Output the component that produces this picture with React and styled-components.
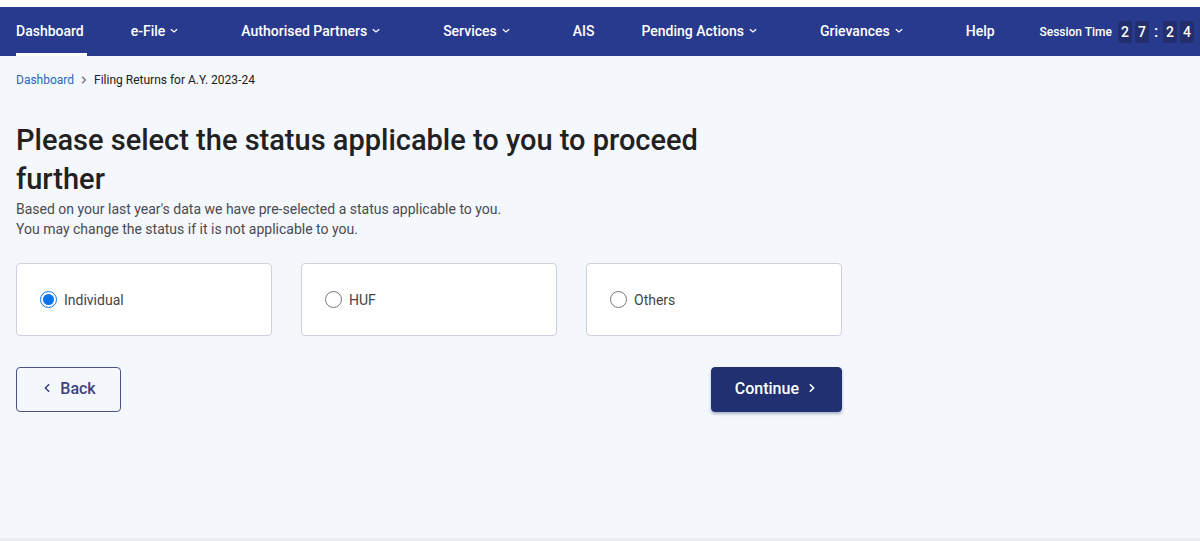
import React, { useState } from 'react';
import styled, { createGlobalStyle } from 'styled-components';

const GlobalStyle = createGlobalStyle`
* {
  box-sizing: border-box;
}
body {
  margin: 0;
  background: #f4f7fb;
  color: #212121;
  font-family: Roboto, "Liberation Sans", sans-serif;
  font-size: 14px;
}
button, input {
  font-family: inherit;
}
`;

const Page = styled.div`
display: flex;
flex-direction: column;
min-height: 100vh;
border-top: 7px solid #fff;
border-bottom: 3px solid #ebedf2;
`;

const NavBar = styled.nav`
display: flex;
align-items: stretch;
justify-content: space-between;
height: 49px;
padding: 0 6px 0 16px;
background: #283a8d;
white-space: nowrap;
`;

const NavList = styled.ul`
display: flex;
gap: 44px;
margin: 0;
padding: 0;
list-style: none;
`;

const NavItem = styled.li`
display: flex;
padding-right: ${(props) => (props.$menu ? '18px' : '3px')};
border-bottom: 3px solid ${(props) => (props.$active ? '#fff' : 'transparent')};
`;

const NavLink = styled.a`
display: flex;
align-items: center;
gap: 4px;
padding-top: 2px;
color: #fff;
font-size: 14px;
font-weight: 500;
text-decoration: none;
`;

const NavButton = styled.button`
display: flex;
align-items: center;
gap: 4px;
padding: 2px 0 0;
border: none;
background: transparent;
color: #fff;
font-size: 14px;
font-weight: 500;
cursor: pointer;
`;

const Session = styled.div`
display: flex;
align-items: center;
color: #fff;
font-size: 12px;
font-weight: 500;
`;

const Timer = styled.div`
display: flex;
align-items: center;
gap: 3px;
margin-left: 6px;
`;

const Digit = styled.span`
width: 14px;
border-radius: 2px;
background: #232f6c;
font-size: 14px;
line-height: 22px;
text-align: center;
`;

const Colon = styled.span`
width: 8px;
font-size: 16px;
line-height: 20px;
text-align: center;
`;

const Content = styled.main`
padding: 16px;
`;

const Breadcrumb = styled.nav`
display: flex;
align-items: center;
gap: 5px;
color: #212121;
font-size: 12px;
line-height: 16px;
`;

const CrumbLink = styled.a`
color: #2a67b9;
text-decoration: none;
`;

const Form = styled.form`
max-width: 826px;
margin-top: 33px;
`;

const Title = styled.h1`
max-width: 720px;
margin: 0;
font-size: 29px;
font-weight: 500;
line-height: 39px;
`;

const Note = styled.p`
margin: 0;
color: #494b52;
font-size: 14px;
line-height: 20px;
`;

const Options = styled.div`
display: grid;
grid-template-columns: repeat(3, 1fr);
gap: 29px;
margin-top: 24px;
`;

const Option = styled.label`
display: flex;
align-items: center;
gap: 7px;
height: 73px;
padding: 0 23px;
border: 1px solid #cdd1de;
border-radius: 4px;
background: #fff;
color: #43454a;
font-size: 14px;
line-height: 20px;
cursor: pointer;
`;

const Radio = styled.input`
appearance: none;
display: grid;
place-items: center;
width: 17px;
height: 17px;
margin: 0;
border: 1px solid #767676;
border-radius: 50%;
background: #fff;

&:checked {
  border-color: #0b74ec;
}
&:checked::before {
  content: "";
  width: 11px;
  height: 11px;
  border-radius: 50%;
  background: #0b74ec;
}
`;

const Actions = styled.div`
display: flex;
justify-content: space-between;
margin-top: 31px;
`;

const Button = styled.button`
display: flex;
align-items: center;
justify-content: center;
gap: 7px;
min-width: 105px;
height: 45px;
padding: 0 23px 3px;
border: 1px solid ${(props) => (props.$primary ? '#203070' : '#4d5486')};
border-radius: 4px;
background: ${(props) => (props.$primary ? '#203070' : 'transparent')};
box-shadow: ${(props) => (props.$primary ? '0 2px 3px rgba(32, 48, 112, 0.35)' : 'none')};
color: ${(props) => (props.$primary ? '#fff' : '#3a427e')};
font-size: 16px;
font-weight: 500;
cursor: pointer;
`;

const icons = {
  down: 'M2 3.5L5.5 6.5L9 3.5',
  left: 'M7.5 2L4 5.5L7.5 9',
  right: 'M3.5 2L7 5.5L3.5 9',
};

const Chevron = ({ to, size = 10, color = 'currentColor' }) => (
  <svg width={size} height={size} viewBox="0 0 11 11" fill="none" stroke={color} strokeWidth="1.4" aria-hidden="true">
    <path d={icons[to]} />
  </svg>
);

const menu = [
  { name: 'Dashboard', active: true },
  { name: 'e-File', menu: true },
  { name: 'Authorised Partners', menu: true },
  { name: 'Services', menu: true },
  { name: 'AIS' },
  { name: 'Pending Actions', menu: true },
  { name: 'Grievances', menu: true },
  { name: 'Help' },
];

const statuses = ['Individual', 'HUF', 'Others'];

export default function App() {
  const [status, setStatus] = useState('Individual');

  return (
    <>
      <GlobalStyle />
      <Page>
        <NavBar>
          <NavList>
            {menu.map((item) => (
              <NavItem key={item.name} $active={item.active} $menu={item.menu}>
                {item.menu ? (
                  <NavButton type="button">
                    {item.name}
                    <Chevron to="down" />
                  </NavButton>
                ) : (
                  <NavLink href="#">{item.name}</NavLink>
                )}
              </NavItem>
            ))}
          </NavList>
          <Session>
            Session Time
            <Timer>
              <Digit>2</Digit>
              <Digit>7</Digit>
              <Colon>:</Colon>
              <Digit>2</Digit>
              <Digit>4</Digit>
            </Timer>
          </Session>
        </NavBar>
        <Content>
          <Breadcrumb>
            <CrumbLink href="#">Dashboard</CrumbLink>
            <Chevron to="right" color="#6b6e78" />
            <span>Filing Returns for A.Y. 2023-24</span>
          </Breadcrumb>
          <Form onSubmit={(e) => e.preventDefault()}>
            <Title>Please select the status applicable to you to proceed further</Title>
            <Note>Based on your last year's data we have pre-selected a status applicable to you.</Note>
            <Note>You may change the status if it is not applicable to you.</Note>
            <Options>
              {statuses.map((name) => (
                <Option key={name}>
                  <Radio
                    type="radio"
                    name="status"
                    checked={status === name}
                    onChange={() => setStatus(name)}
                  />
                  {name}
                </Option>
              ))}
            </Options>
            <Actions>
              <Button type="button">
                <Chevron to="left" size={12} />
                Back
              </Button>
              <Button type="submit" $primary>
                Continue
                <Chevron to="right" size={12} />
              </Button>
            </Actions>
          </Form>
        </Content>
      </Page>
    </>
  );
}
